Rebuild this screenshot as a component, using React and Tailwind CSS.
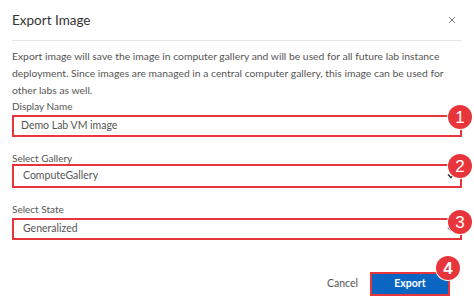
import React from "react";

function Badge({ n, className }) {
  return (
    <div
      className={
        "absolute flex h-[24px] w-[24px] items-center justify-center rounded-full bg-[#e8353b] text-[17px] leading-none text-white ring-1 ring-white " +
        className
      }
      style={{ fontFamily: '"Liberation Sans", Arial, sans-serif' }}
    >
      {n}
    </div>
  );
}

function Chevron() {
  return (
    <svg width="8" height="6" viewBox="0 0 8 6" className="absolute right-[5px] top-1/2 -translate-y-1/2">
      <path d="M1 1.5 L4 4.5 L7 1.5" fill="none" stroke="#333" strokeWidth="1.4" />
    </svg>
  );
}

function Field({ label, value, badge, chevron, height, gap, badgeTop, padL }) {
  return (
    <div className={"flex flex-col " + gap}>
      <div className="text-[10px] leading-[12px] text-[#555]">{label}</div>
      <div className={"relative flex items-center border-2 border-[#e8353b] text-[10.5px] text-[#555] " + height + " " + padL}>
        {value}
        {chevron && <Chevron />}
        <Badge n={badge} className={"right-[-12px] " + badgeTop} />
      </div>
    </div>
  );
}

export default function App() {
  return (
    <div
      className="h-[306px] w-[474px] overflow-hidden bg-white text-[#444]"
      style={{ fontFamily: 'Lato, "Open Sans", sans-serif' }}
    >
      <div className="flex flex-col px-3">
        <div className="flex h-[41px] items-center justify-between border-b border-[#e6e6e6]">
          <span className="text-[13.5px] text-[#333]">Export Image</span>
          <svg width="8" height="8" viewBox="0 0 8 8" className="mr-[6px]">
            <path d="M1 1 L7 7 M7 1 L1 7" stroke="#777" strokeWidth="1" />
          </svg>
        </div>

        <p className="pt-[7px] text-[10.35px] leading-[17px] text-[#555]">
          <span className="block whitespace-nowrap">
            Export image will save the image in computer gallery and will be used for all future lab instance
          </span>
          <span className="block whitespace-nowrap">
            deployment. Since images are managed in a central computer gallery, this image can be used for
          </span>
          <span className="block whitespace-nowrap">other labs as well.</span>
        </p>

        <div className="flex flex-col gap-[15px] pt-[1px]">
          <Field label="Display Name" value="Demo Lab VM image" badge="1" height="h-[22px]" gap="gap-[3px]" badgeTop="top-[-12px]" padL="pl-[7px]" />
          <Field label="Select Gallery" value="ComputeGallery" badge="2" chevron height="h-[24px]" gap="gap-0" badgeTop="top-[-12px]" padL="pl-[9px]" />
          <Field label="Select State" value="Generalized" badge="3" chevron height="h-[22px]" gap="gap-[3px]" badgeTop="top-[-10px]" padL="pl-[9px]" />
        </div>

        <div className="flex items-center justify-end gap-[12px] pr-[12px] pt-[32px]">
          <span className="text-[10.5px] text-[#555]">Cancel</span>
          <div className="relative flex h-[24px] w-[80px] items-center justify-center border-2 border-[#e8353b] bg-[#0b66c3] text-[10.5px] font-bold text-white">
            Export
            <Badge n="4" className="right-[-12px] top-[-18px]" />
          </div>
        </div>
      </div>
    </div>
  );
}
